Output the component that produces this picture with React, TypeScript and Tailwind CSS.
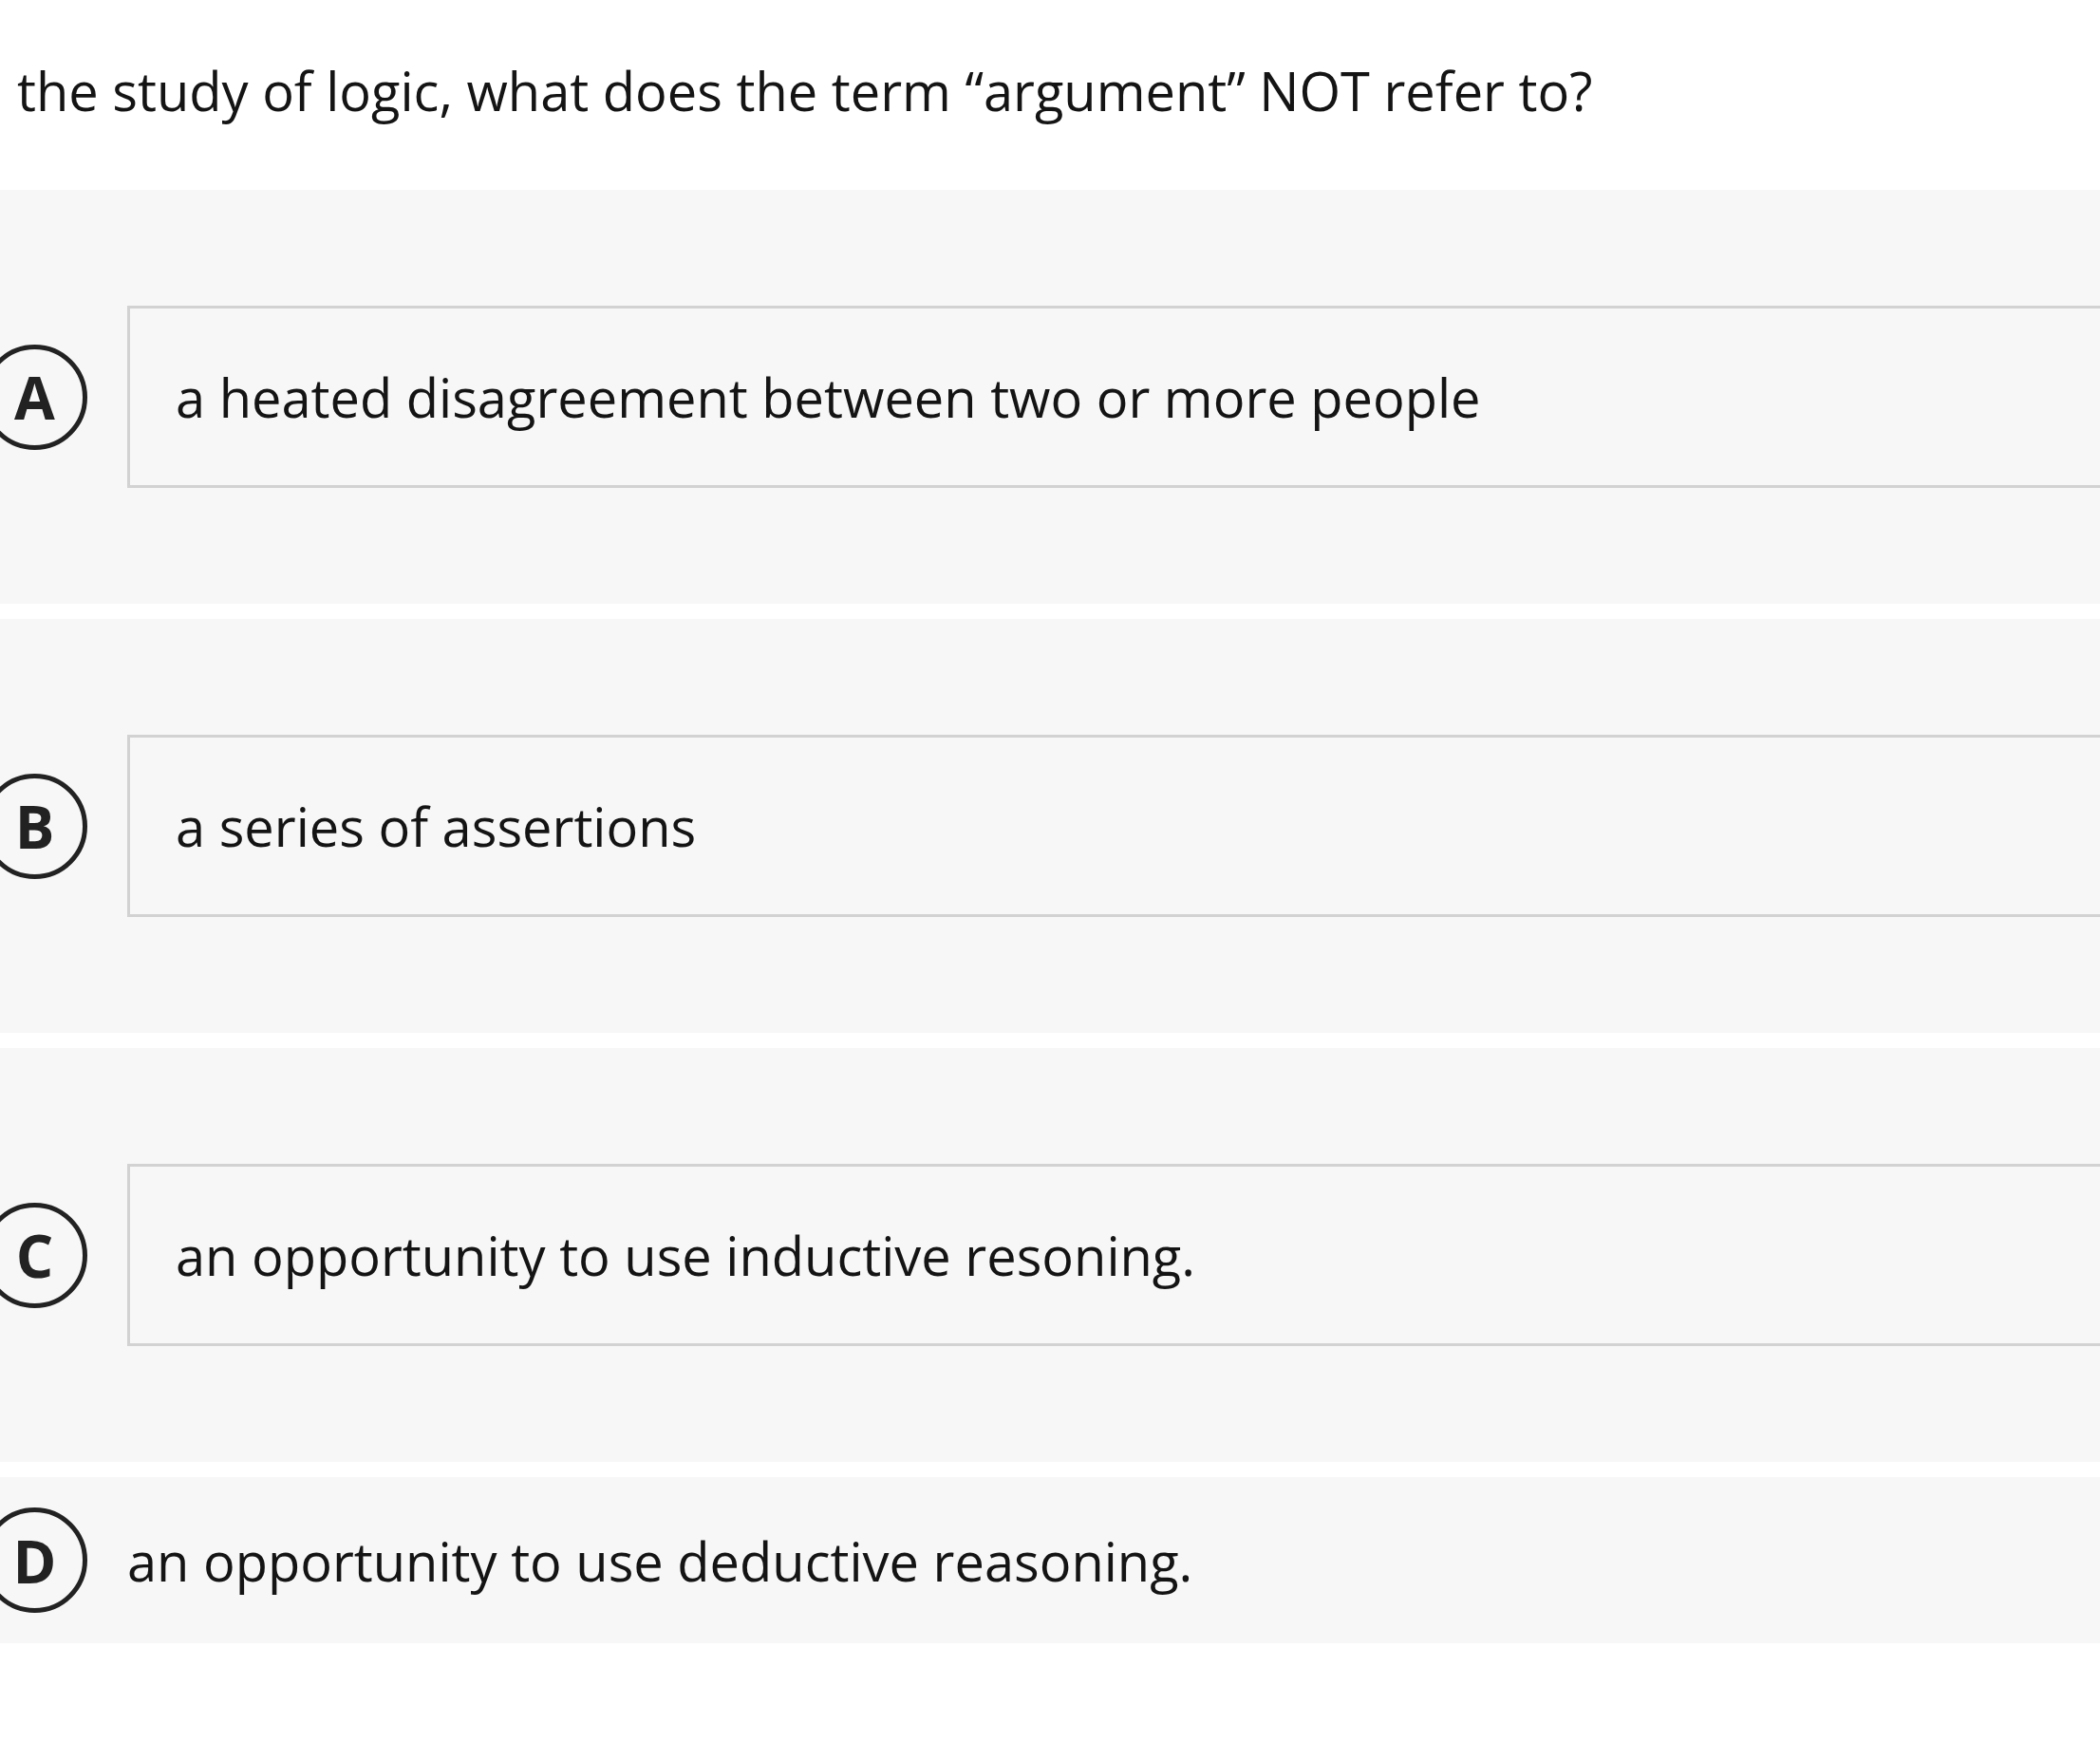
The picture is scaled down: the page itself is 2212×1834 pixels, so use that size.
import React from "react";

type Choice = {
  letter: string;
  text: string;
  boxed: boolean;
};

const CHOICES: Choice[] = [
  { letter: "A", text: "a heated disagreement between two or more people", boxed: true },
  { letter: "B", text: "a series of assertions", boxed: true },
  { letter: "C", text: "an opportunity to use inductive resoning.", boxed: true },
  { letter: "D", text: "an opportunity to use deductive reasoning.", boxed: false },
];

function LetterBadge({ letter }: { letter: string }) {
  return (
    <div className="-ml-[19px] flex h-[111px] w-[111px] flex-shrink-0 items-center justify-center rounded-full border-[5px] border-[#222222]">
      <span className="text-[62px] font-bold leading-none text-[#222222]">{letter}</span>
    </div>
  );
}

export default function App() {
  return (
    <div className="min-h-screen w-full overflow-hidden bg-white font-['Open_Sans',sans-serif] text-[#141414]">
      {/* Question */}
      <div className="h-[200px] pl-[18px] pt-[53px] text-[56px] leading-[84px]">
        the study of logic, what does the term “argument” NOT refer to?
      </div>

      {/* Choices */}
      <div className="flex flex-col gap-4">
        {CHOICES.map((c) =>
          c.boxed ? (
            <div key={c.letter} className="flex h-[436px] items-center bg-[#f7f7f7]">
              <LetterBadge letter={c.letter} />
              <div className="ml-[42px] flex h-[192px] flex-1 items-center border-[3px] border-r-0 border-[#d2d2d2] pl-[48px]">
                <span className="text-[56px] leading-[84px]">{c.text}</span>
              </div>
            </div>
          ) : (
            <div key={c.letter} className="flex h-[175px] items-center bg-[#f7f7f7]">
              <LetterBadge letter={c.letter} />
              <span className="ml-[42px] text-[56px] leading-[84px]">{c.text}</span>
            </div>
          )
        )}
      </div>
    </div>
  );
}
